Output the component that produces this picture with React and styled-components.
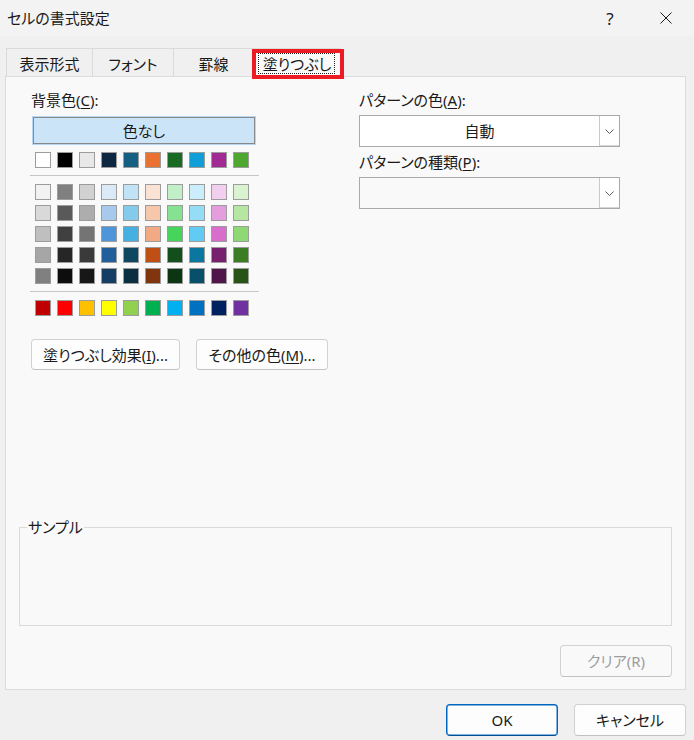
import React from 'react'
import { styled, createGlobalStyle } from 'styled-components'

const GlobalStyle = createGlobalStyle`
  html, body {
    margin: 0;
    padding: 0;
    background: #f0f0f0;
  }
  body {
    font-family: "Noto Sans", "Noto Sans CJK JP", sans-serif;
    font-feature-settings: "palt";
    color: #1a1a1a;
  }
`;

const themeRow = ['#ffffff', '#000000', '#e8e8e8', '#0e2841', '#156082', '#e97132', '#196b24', '#0f9ed5', '#a02b93', '#4ea72e'];

const tintRows = [
  ['#f2f2f2', '#808080', '#d1d1d1', '#dceaf7', '#c0e4f5', '#fbe2d5', '#c1f0c8', '#caeefb', '#f2ceef', '#daf2d0'],
  ['#d9d9d9', '#595959', '#adadad', '#a6c9ec', '#83caeb', '#f7c7ac', '#84e291', '#95dcf7', '#e59edd', '#b5e6a2'],
  ['#bfbfbf', '#404040', '#747474', '#4e95d9', '#46b1e1', '#f2aa84', '#47d45a', '#61cbf3', '#d86dcb', '#8ed973'],
  ['#a6a6a6', '#262626', '#3a3a3a', '#215f9a', '#0f4761', '#c04f15', '#124f1a', '#0b76a0', '#77206d', '#3b7d23'],
  ['#808080', '#0d0d0d', '#171717', '#153d64', '#0a2f41', '#80350e', '#0c3512', '#074f6a', '#501549', '#275317'],
];

const standardRow = ['#c00000', '#ff0000', '#ffc000', '#ffff00', '#92d050', '#00b050', '#00b0f0', '#0070c0', '#002060', '#7030a0'];

const tabs = ['表示形式', 'フォント', '罫線', '塗りつぶし'];
const tabWidths = [86, 81, 80, 88];

const Dialog = styled.div`
  width: 694px;
  height: 740px;
  display: flex;
  flex-direction: column;
  background: #f0f0f0;
  font-size: 15px;
  overflow: hidden;
`;

const TitleBar = styled.div`
  height: 36px;
  display: flex;
  align-items: center;
  justify-content: space-between;
  padding-left: 7px;
  background: #f3f3f3;
`;

const TitleText = styled.div`
  font-size: 15px;
  line-height: 20px;
`;

const TitleControls = styled.div`
  display: flex;
  height: 100%;
`;

const TitleButton = styled.div`
  width: 56px;
  display: flex;
  align-items: center;
  justify-content: center;
  font-family: "Noto Sans", sans-serif;
  font-size: 17px;
`;

const TabStrip = styled.div`
  display: flex;
  height: 28px;
  margin-top: 12px;
  padding-left: 6px;
  position: relative;
  z-index: 1;
`;

const Tab = styled.div`
  box-sizing: border-box;
  width: ${p => p.$width}px;
  height: ${p => (p.$active ? 29 : 28)}px;
  display: flex;
  align-items: center;
  justify-content: center;
  border-top: 1px solid #dadada;
  border-left: 1px solid #dadada;
  background: ${p => (p.$active ? '#f9f9f9' : '#f0f0f0')};
  position: relative;
  padding-top: 1px;
  &:last-child {
    border-right: 1px solid #dadada;
  }
`;

const FocusRect = styled.span`
  position: absolute;
  top: 4px;
  left: 4px;
  right: 5px;
  bottom: 3px;
  border: 1px dotted #222;
`;

const Highlight = styled.span`
  position: absolute;
  top: 0;
  left: -2px;
  right: -4px;
  height: 30px;
  border: 4px solid #ed1c24;
  box-sizing: border-box;
  pointer-events: none;
`;

const Panel = styled.div`
  box-sizing: border-box;
  margin-left: 5px;
  width: 681px;
  height: 614px;
  background: #f9f9f9;
  border: 1px solid #dcdcdc;
  display: flex;
  flex-direction: column;
  padding: 14px 0 12px 0;
`;

const Columns = styled.div`
  display: flex;
  padding-left: 25px;
`;

const LeftColumn = styled.div`
  width: 328px;
  display: flex;
  flex-direction: column;
`;

const RightColumn = styled.div`
  width: 261px;
  display: flex;
  flex-direction: column;
`;

const Label = styled.div`
  line-height: 18px;
  height: 18px;
  margin-top: ${p => p.$gap || 0}px;
  white-space: nowrap;
`;

const NoColorButton = styled.div`
  box-sizing: border-box;
  margin: 8px 0 0 2px;
  width: 222px;
  height: 27px;
  background: #cce4f7;
  border: 1px solid #8a8a8a;
  box-shadow: 0 0 0 1px #b3d7f5;
  display: flex;
  align-items: center;
  justify-content: center;
  line-height: 18px;
`;

const SwatchGrid = styled.div`
  display: grid;
  grid-template-columns: repeat(10, 16px);
  column-gap: 6px;
  row-gap: 5px;
  margin-left: 4px;
  margin-top: ${p => p.$top}px;
`;

const Swatch = styled.span`
  box-sizing: border-box;
  width: 16px;
  height: 16px;
  border: 1px solid #9c9c9c;
  background: ${p => p.$color};
`;

const Divider = styled.div`
  margin: 7px 0 0 -1px;
  width: 229px;
  height: 1px;
  background: #c6c6c6;
`;

const ButtonRow = styled.div`
  display: flex;
  gap: 16px;
  margin-top: 23px;
`;

const Button = styled.div`
  box-sizing: border-box;
  width: ${p => p.$width}px;
  height: ${p => p.$height || 31}px;
  border: 1px solid ${p => (p.$primary ? '#0067c0' : '#d1d1d1')};
  border-bottom-color: ${p => (p.$primary ? '#00509a' : '#c2c2c2')};
  border-radius: 4px;
  background: ${p => (p.$disabled ? '#f9f9f9' : '#fdfdfd')};
  color: ${p => (p.$disabled ? '#9d9d9d' : '#1a1a1a')};
  display: flex;
  align-items: center;
  justify-content: center;
  line-height: 18px;
  white-space: nowrap;
  ${p => p.$primary && 'box-shadow: inset 0 0 0 0.5px #0067c0;'}
`;

const Select = styled.div`
  box-sizing: border-box;
  margin-top: 6px;
  height: 32px;
  display: flex;
  border: 1px solid #a9a9a9;
  background: ${p => (p.$disabled ? '#f9f9f9' : '#ffffff')};
`;

const SelectValue = styled.div`
  flex: 1;
  display: flex;
  align-items: center;
  justify-content: center;
  line-height: 18px;
`;

const SelectArrow = styled.div`
  box-sizing: border-box;
  width: 20px;
  border-left: 1px solid #c9c9c9;
  background: #ffffff;
  display: flex;
  align-items: center;
  justify-content: center;
  box-shadow: inset 0 -1px 0 #d6d6d6;
`;

const SampleBox = styled.div`
  box-sizing: border-box;
  position: relative;
  margin: auto 13px 0 13px;
  height: 99px;
  border: 1px solid #dadada;
`;

const SampleLegend = styled.span`
  position: absolute;
  top: -10px;
  left: 7px;
  padding: 0 1px;
  line-height: 18px;
  background: #f9f9f9;
`;

const ClearRow = styled.div`
  display: flex;
  justify-content: flex-end;
  margin: 19px 13px 0 0;
`;

const Footer = styled.div`
  display: flex;
  justify-content: flex-end;
  gap: 16px;
  margin-top: 14px;
  padding-right: 8px;
`;

const Key = styled.span`
  text-decoration: underline;
  text-underline-offset: 2px;
  text-decoration-thickness: 1px;
`;

const Chevron = () => (
  <svg width="9" height="5" viewBox="0 0 9 5">
    <path d="M0.5 0.5 L4.5 4.5 L8.5 0.5" fill="none" stroke="#5a5a5a" strokeWidth="1" />
  </svg>
);

const CloseIcon = () => (
  <svg width="12" height="12" viewBox="0 0 12 12">
    <path d="M0.5 0.5 L11.5 11.5 M11.5 0.5 L0.5 11.5" stroke="#1a1a1a" strokeWidth="1" />
  </svg>
);

const Swatches = ({ rows, top }) => (
  <SwatchGrid $top={top}>
    {rows.flat().map((c, i) => (
      <Swatch key={i} $color={c} />
    ))}
  </SwatchGrid>
);

const App = () => {
  return (
    <>
      <GlobalStyle />
      <Dialog>
        <TitleBar>
          <TitleText>セルの書式設定</TitleText>
          <TitleControls>
            <TitleButton>?</TitleButton>
            <TitleButton><CloseIcon /></TitleButton>
          </TitleControls>
        </TitleBar>

        <TabStrip>
          {tabs.map((t, i) => {
            const active = i === tabs.length - 1;
            return (
              <Tab key={t} $width={tabWidths[i]} $active={active}>
                {t}
                {active && <FocusRect />}
                {active && <Highlight />}
              </Tab>
            );
          })}
        </TabStrip>

        <Panel>
          <Columns>
            <LeftColumn>
              <Label>背景色(<Key>C</Key>):</Label>
              <NoColorButton>色なし</NoColorButton>
              <Swatches rows={[themeRow]} top={8} />
              <Divider />
              <Swatches rows={tintRows} top={8} />
              <Divider />
              <Swatches rows={[standardRow]} top={8} />
              <ButtonRow>
                <Button $width={149}>塗りつぶし効果(<Key>I</Key>)...</Button>
                <Button $width={132}>その他の色(<Key>M</Key>)...</Button>
              </ButtonRow>
            </LeftColumn>

            <RightColumn>
              <Label>パターンの色(<Key>A</Key>):</Label>
              <Select>
                <SelectValue>自動</SelectValue>
                <SelectArrow><Chevron /></SelectArrow>
              </Select>
              <Label $gap={6}>パターンの種類(<Key>P</Key>):</Label>
              <Select $disabled>
                <SelectValue />
                <SelectArrow><Chevron /></SelectArrow>
              </Select>
            </RightColumn>
          </Columns>

          <SampleBox>
            <SampleLegend>サンプル</SampleLegend>
          </SampleBox>

          <ClearRow>
            <Button $width={112} $height={32} $disabled>クリア(R)</Button>
          </ClearRow>
        </Panel>

        <Footer>
          <Button $width={112} $height={32} $primary>OK</Button>
          <Button $width={112} $height={32}>キャンセル</Button>
        </Footer>
      </Dialog>
    </>
  );
};

export default App;
